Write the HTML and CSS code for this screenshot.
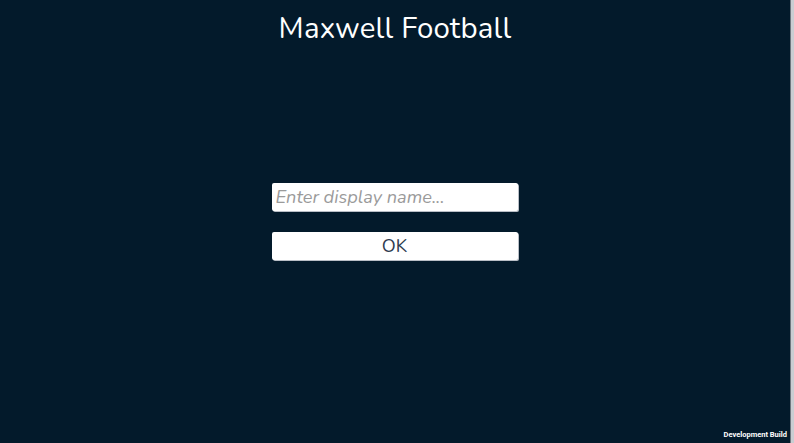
FILE: index.html
```html
<!DOCTYPE html>
<html lang="en">
<head>
    <meta charset="UTF-8">
    <meta name="viewport" content="width=device-width, initial-scale=1.0">
    <title>Maxwell Football</title>

    <link rel="stylesheet" href="styles.css">

</head>
<body>

    <div class="screen">
        <div class="stage">
            <h1 class="title">Maxwell Football</h1>

            <div class="login">
                <input class="name-input" type="text" placeholder="Enter display name...">
                <button class="ok-button">OK</button>
            </div>

            <div class="build-label">Development Build</div>
        </div>
        <div class="edge"></div>
    </div>

</body>
</html>
```

FILE: styles.css
```css
html, body {
margin: 0;
padding: 0;
height: 100%;
}

body {
background: #031a2b;
font-family: "Nunito", Lato, "Open Sans", sans-serif;
overflow: hidden;
}

.screen {
display: flex;
height: 443px;
}

.stage {
flex: 1;
display: flex;
flex-direction: column;
align-items: center;
position: relative;
}

.edge {
flex-shrink: 0;
width: 3px;
border-left: 1px solid #6f7880;
background: #c9cdd2;
}

.title {
margin: 11px 0 0 0;
color: #ffffff;
font-size: 29.4px;
font-weight: 400;
line-height: 34px;
letter-spacing: 0.2px;
}

.login {
margin-top: 138px;
margin-right: 1px;
width: 246px;
display: flex;
flex-direction: column;
gap: 21px;
}

.name-input {
box-sizing: border-box;
height: 28px;
width: 100%;
margin: 0;
padding: 0 4px;
border: none;
border-radius: 2px;
background: #ffffff;
font-family: inherit;
font-size: 18.2px;
font-style: italic;
color: #2e3c4f;
outline: none;
box-shadow: 1px 1px 0 #b9bec6;
}

.name-input::placeholder {
color: #9a9a9a;
font-style: italic;
}

.ok-button {
box-sizing: border-box;
height: 28px;
width: 100%;
margin: 0;
padding: 0;
border: none;
border-radius: 2px;
background: #ffffff;
font-family: inherit;
font-size: 18.2px;
color: #2e3c4f;
box-shadow: 1px 1px 0 #b9bec6;
}

.build-label {
position: absolute;
right: 3px;
bottom: 4px;
color: #ffffff;
font-family: Roboto, "Liberation Sans", sans-serif;
font-size: 7.5px;
font-weight: 700;
}
```
